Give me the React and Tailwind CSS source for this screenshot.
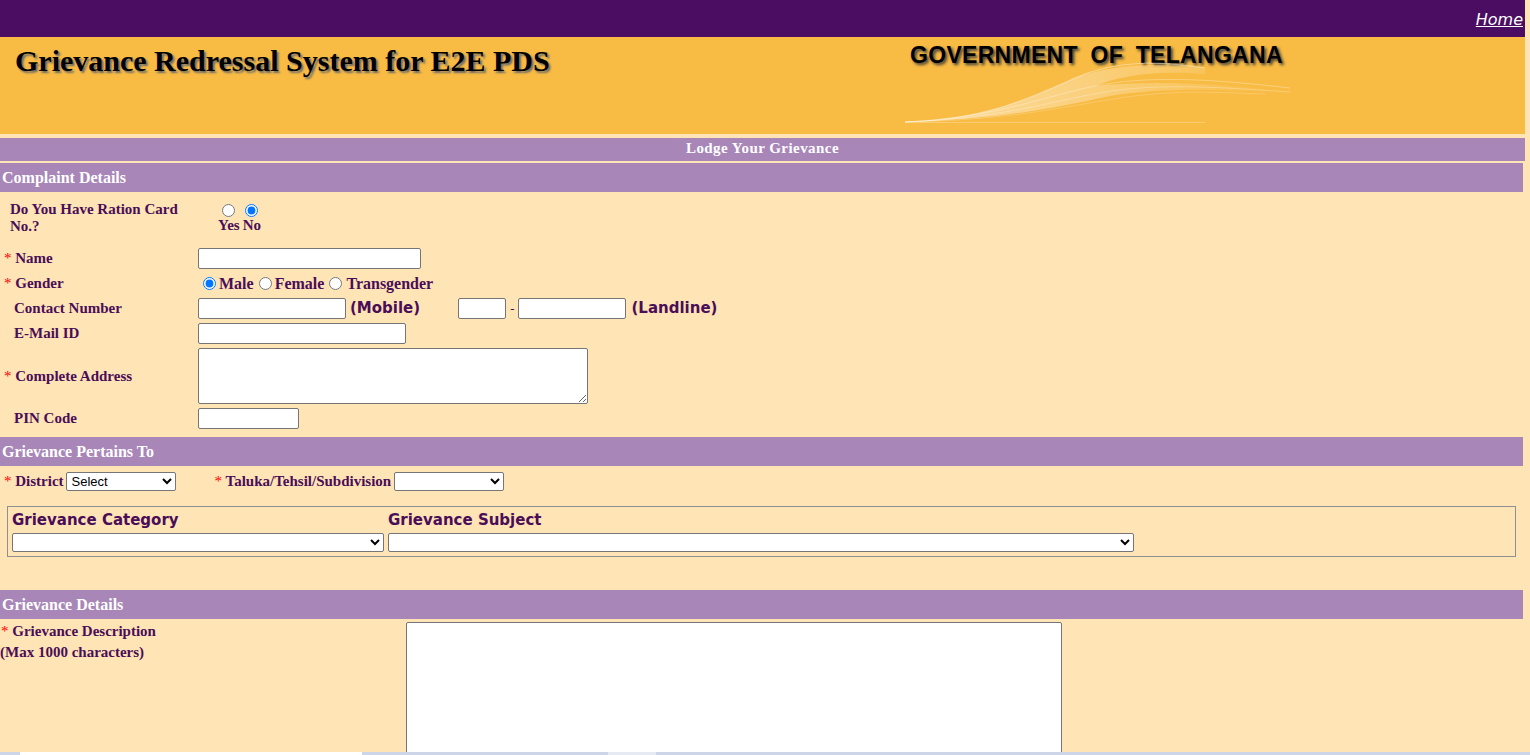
import React from 'react';

const label = "text-[15px] font-bold text-[#4a0d57] leading-[17px]";
const sans = "font-['DejaVu_Sans',Verdana,sans-serif]";
const field = "h-[21px] border border-[#767676] rounded-[2px] bg-white px-[2px] text-[13px]";
const selectCls = "h-[19px] border border-[#767676] rounded-[2px] bg-white text-[13px] text-black font-['Liberation_Sans',Arial,sans-serif] pl-[1px]";

function Star() {
  return <span className="text-[#ff0000] font-normal">*</span>;
}

function Row({ text, required, h = 'h-[21px]', children }) {
  return (
    <div className={`flex items-center ${h}`}>
      <div className={`w-[198px] shrink-0 ${required ? 'pl-[4px]' : 'pl-[14px]'} ${label}`}>
        {required && <><Star />{' '}</>}{text}
      </div>
      <div className="flex items-center">{children}</div>
    </div>
  );
}

function SectionBar({ title }) {
  return (
    <div className="w-[1523px] h-[29px] bg-[#a886b8] flex items-center pl-[2px] text-white font-bold text-[16px]">
      {title}
    </div>
  );
}

function Swoosh() {
  return (
    <svg width="390" height="66" viewBox="0 0 390 66" className="block">
      <defs>
        <linearGradient id="sw" x1="0" y1="0" x2="1" y2="0">
          <stop offset="0" stopColor="#fff" stopOpacity="0.5" />
          <stop offset="0.5" stopColor="#fff" stopOpacity="0.3" />
          <stop offset="1" stopColor="#fff" stopOpacity="0" />
        </linearGradient>
      </defs>
      <path d="M0,62 C80,60 125,38 170,18 C205,5 250,2 300,8 L300,14 C250,10 215,16 190,26 C250,20 320,24 385,32 L385,34 C320,28 250,28 205,36 C150,48 90,60 0,62 Z" fill="url(#sw)" />
      <path d="M0,62 C80,60 125,38 170,18 S260,2 300,8" fill="none" stroke="#fff" strokeOpacity="0.4" strokeWidth="1.2" />
      <path d="M0,62 C90,58 140,36 190,26 S300,18 385,28" fill="none" stroke="#fff" strokeOpacity="0.3" strokeWidth="1" />
      <path d="M0,62 C100,58 150,40 200,32 S300,26 385,32" fill="none" stroke="#fff" strokeOpacity="0.25" strokeWidth="1" />
      <path d="M0,62 C110,60 160,46 215,38 S300,32 360,34" fill="none" stroke="#fff" strokeOpacity="0.2" strokeWidth="1" />
      <path d="M0,62.5 L300,62.5" stroke="#fff" strokeOpacity="0.25" strokeWidth="1" />
    </svg>
  );
}

export default function App() {
  return (
    <div className="relative h-screen overflow-hidden bg-[#ffe4b5] font-['Liberation_Serif','Times_New_Roman',serif]">
      {/* top strip */}
      <div className="w-[1525px] h-[37px] bg-[#4b0d61] flex justify-end items-start pt-[10px] pr-[2px]">
        <a href="#" className={`${sans} italic text-[16px] leading-[19px] text-white underline`}>Home</a>
      </div>

      {/* banner */}
      <div className="w-[1525px] h-[97px] bg-[#f8bb43] flex">
        <div className="w-[905px] pl-[15px] pt-[7px]">
          <h1 className="text-[30px] font-bold text-black leading-[34px] [text-shadow:2px_2px_2px_#6b6b6b]">
            Grievance Redressal System for E2E PDS
          </h1>
        </div>
        <div className="w-[390px] flex flex-col">
          <div className="pl-[5px] pt-[5px] font-['Liberation_Sans',Arial,sans-serif] font-bold text-[23px] leading-[26px] text-black tracking-[0.3px] [word-spacing:6px] [text-shadow:2px_2px_3px_#3a3a3a]">
            GOVERNMENT OF TELANGANA
          </div>
          <div className="-mt-[8px]">
            <Swoosh />
          </div>
        </div>
      </div>

      <div className="mt-[4px] w-[1525px] h-[23px] bg-[#a886b8] flex justify-center pt-[2px] text-white font-bold text-[15px] leading-[17px] tracking-[0.45px]">
        Lodge Your Grievance
      </div>

      <div className="mt-[2px]">
        <SectionBar title="Complaint Details" />
      </div>

      {/* ration card */}
      <div className="flex pt-[9px]">
        <div className={`w-[218px] pl-[10px] pr-[20px] ${label} leading-[16px]`}>
          Do You Have Ration Card No.?
        </div>
        <div className="flex gap-[3px]">
          <div className="flex flex-col items-center">
            <input type="radio" name="ration" className="w-[13px] h-[13px] mt-[3px]" />
            <span className={label}>Yes</span>
          </div>
          <div className="flex flex-col items-center">
            <input type="radio" name="ration" defaultChecked className="w-[13px] h-[13px] mt-[3px]" />
            <span className={label}>No</span>
          </div>
        </div>
      </div>

      <div className="mt-[13px] flex flex-col gap-[4px]">
        <Row text="Name" required>
          <input type="text" className={`${field} w-[223px]`} />
        </Row>
        <Row text="Gender" required>
          <div className="flex items-center h-[21px] text-[16px] font-bold text-[#4a0d57] leading-[18px]">
            <input type="radio" name="gender" defaultChecked className="ml-[5px] mr-[3px] w-[13px] h-[13px]" />
            <span>Male</span>
            <input type="radio" name="gender" className="ml-[5px] mr-[3px] w-[13px] h-[13px]" />
            <span>Female</span>
            <input type="radio" name="gender" className="ml-[5px] mr-[4px] w-[13px] h-[13px]" />
            <span>Transgender</span>
          </div>
        </Row>
        <Row text="Contact Number">
          <input type="text" className={`${field} w-[148px]`} />
          <span className={`${sans} ml-[4px] text-[15px] leading-[17px] font-bold text-[#4a0d57]`}>(Mobile)</span>
          <input type="text" className={`${field} ml-[38px] w-[48px]`} />
          <span className="ml-[4px] text-[13px] leading-[15px] text-[#4a0d57]">-</span>
          <input type="text" className={`${field} ml-[4px] w-[108px]`} />
          <span className={`${sans} ml-[5px] text-[15px] leading-[17px] font-bold text-[#4a0d57]`}>(Landline)</span>
        </Row>
        <Row text="E-Mail ID">
          <input type="text" className={`${field} w-[208px]`} />
        </Row>
        <Row text="Complete Address" required h="h-[56px]">
          <textarea className="w-[390px] h-[56px] border border-[#767676] rounded-[2px] bg-white block" />
        </Row>
        <Row text="PIN Code">
          <input type="text" className={`${field} w-[101px]`} />
        </Row>
      </div>

      <div className="mt-[8px]">
        <SectionBar title="Grievance Pertains To" />
      </div>

      {/* district / taluka */}
      <div className="mt-[6px] flex items-center h-[19px]">
        <div className={`pl-[4px] ${label}`}><Star /> District</div>
        <select className={`${selectCls} ml-[2px] w-[110px]`} defaultValue="Select">
          <option>Select</option>
        </select>
        <div className={`ml-[39px] ${label}`}><Star /> Taluka/Tehsil/Subdivision</div>
        <select className={`${selectCls} ml-[3px] w-[110px]`}>
          <option></option>
        </select>
      </div>

      {/* category / subject */}
      <div className="mt-[15px] ml-[7px] w-[1509px] h-[51px] border border-[#8f8f8f] pl-[4px] pt-[3px] flex">
        <div className="w-[376px] flex flex-col">
          <div className={`${sans} text-[15px] font-bold leading-[20px] text-[#4a0d57]`}>Grievance Category</div>
          <select className={`${selectCls} mt-[3px] w-[372px]`}>
            <option></option>
          </select>
        </div>
        <div className="flex flex-col">
          <div className={`${sans} text-[15px] font-bold leading-[20px] text-[#4a0d57]`}>Grievance Subject</div>
          <select className={`${selectCls} mt-[3px] w-[746px]`}>
            <option></option>
          </select>
        </div>
      </div>

      <div className="mt-[33px]">
        <SectionBar title="Grievance Details" />
      </div>

      <div className="mt-[3px] flex">
        <div className={`w-[406px] shrink-0 -mt-[1px] pl-[1px] ${label} leading-[21px]`}>
          <div><Star /> Grievance Description</div>
          <div className="-ml-[1px]">(Max 1000 characters)</div>
        </div>
        <textarea className="w-[656px] h-[220px] border border-[#767676] rounded-[2px] bg-white block" />
      </div>

      {/* window strip at the bottom edge */}
      <div className="absolute bottom-0 left-0 w-full h-[3px] bg-[#cdd6e8]">
        <div className="absolute left-[20px] top-0 w-[342px] h-[3px] bg-white" />
        <div className="absolute left-[608px] top-0 w-[48px] h-[3px] bg-[#e6eaf3]" />
      </div>
    </div>
  );
}
